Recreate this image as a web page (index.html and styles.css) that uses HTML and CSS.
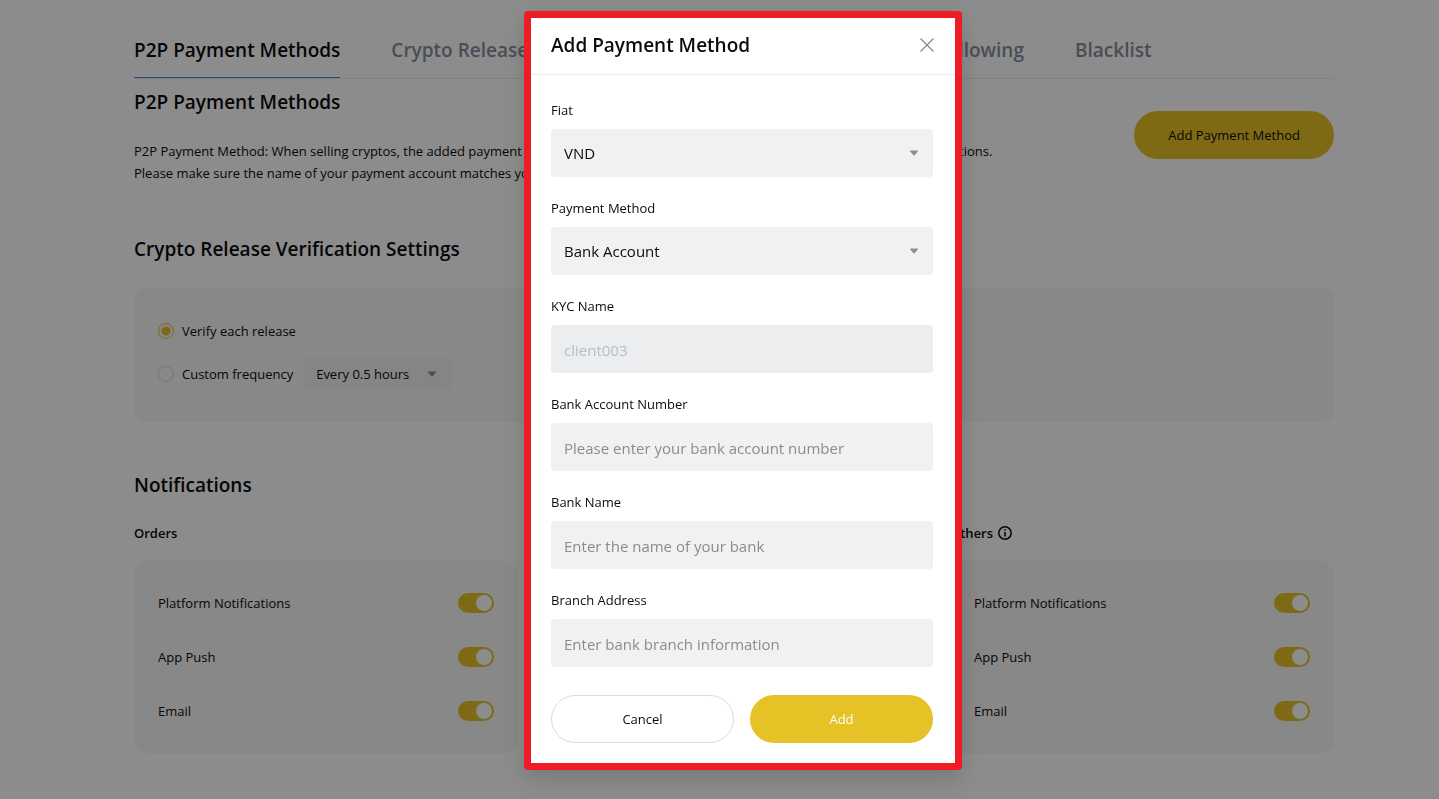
FILE: index.html
```html
<!DOCTYPE html>
<html lang="en">
<head>
<meta charset="utf-8">
<title>P2P Payment Methods</title>
<link rel="stylesheet" href="styles.css">
</head>
<body>
<main class="page">
  <nav class="tabs">
    <a class="tab tab-active" href="#methods">P2P Payment Methods</a>
    <a class="tab" href="#release">Crypto Release Verification Settings</a>
    <a class="tab" href="#notifications">Notifications</a>
    <a class="tab" href="#following">Following</a>
    <a class="tab" href="#blacklist">Blacklist</a>
  </nav>

  <section class="intro" id="methods">
    <div class="intro-text">
      <h2 class="heading">P2P Payment Methods</h2>
      <p class="intro-copy">P2P Payment Method: When selling cryptos, the added payment method will be displayed to buyers as one of your available payment options.<br>Please make sure the name of your payment account matches your verified name.</p>
    </div>
    <button class="btn btn-primary btn-dark" type="button">Add Payment Method</button>
  </section>

  <section class="release" id="release">
    <h2 class="heading">Crypto Release Verification Settings</h2>
    <div class="release-card">
      <div class="release-row">
        <label class="choice"><input class="radio" type="radio" name="verify" checked>Verify each release</label>
      </div>
      <div class="release-row">
        <label class="choice"><input class="radio" type="radio" name="verify">Custom frequency</label>
        <div class="select-box select-small">
          <select class="select" aria-label="Frequency"><option>Every 0.5 hours</option></select>
          <svg class="caret" viewBox="0 0 8 6" aria-hidden="true"><path d="M0 1.2C0 .8.3.5.7.5h6.6c.4 0 .7.3.7.7L4.5 5.3c-.3.3-.7.3-1 0z"/></svg>
        </div>
      </div>
    </div>
  </section>

  <section class="notices" id="notifications">
    <h2 class="heading">Notifications</h2>
    <div class="notice-grid">
      <div class="notice">
        <h3 class="subheading">Orders</h3>
        <div class="notice-card">
          <label class="notice-row">Platform Notifications<input class="switch" type="checkbox" role="switch" checked></label>
          <label class="notice-row">App Push<input class="switch" type="checkbox" role="switch" checked></label>
          <label class="notice-row">Email<input class="switch" type="checkbox" role="switch" checked></label>
        </div>
      </div>
      <div class="notice">
        <h3 class="subheading">Chat</h3>
        <div class="notice-card">
          <label class="notice-row">Platform Notifications<input class="switch" type="checkbox" role="switch" checked></label>
          <label class="notice-row">App Push<input class="switch" type="checkbox" role="switch" checked></label>
          <label class="notice-row">Email<input class="switch" type="checkbox" role="switch" checked></label>
        </div>
      </div>
      <div class="notice">
        <h3 class="subheading">Others
          <svg class="info" viewBox="0 0 14 14" aria-hidden="true"><circle cx="7" cy="7" r="6.2" fill="none" stroke="currentColor" stroke-width="1.5"/><path d="M6.2 3.2h1.6v1.5H6.2zM6.2 5.9h1.6v4.6H6.2z" fill="currentColor"/></svg>
        </h3>
        <div class="notice-card">
          <label class="notice-row">Platform Notifications<input class="switch" type="checkbox" role="switch" checked></label>
          <label class="notice-row">App Push<input class="switch" type="checkbox" role="switch" checked></label>
          <label class="notice-row">Email<input class="switch" type="checkbox" role="switch" checked></label>
        </div>
      </div>
    </div>
  </section>
</main>

<div class="overlay">
  <form class="modal" role="dialog" aria-labelledby="modal-title">
    <header class="modal-head">
      <h1 class="modal-title" id="modal-title">Add Payment Method</h1>
      <button class="close" type="button" aria-label="Close"><svg class="close-icon" viewBox="0 0 14 14" aria-hidden="true"><path d="M.5.5l13 13M13.5.5l-13 13" fill="none" stroke="currentColor" stroke-width="1.4"/></svg></button>
    </header>
    <div class="modal-body">
      <div class="field">
        <label class="field-label" for="fiat">Fiat</label>
        <div class="select-box">
          <select class="select" id="fiat"><option>VND</option></select>
          <svg class="caret" viewBox="0 0 8 6" aria-hidden="true"><path d="M0 1.2C0 .8.3.5.7.5h6.6c.4 0 .7.3.7.7L4.5 5.3c-.3.3-.7.3-1 0z"/></svg>
        </div>
      </div>
      <div class="field">
        <label class="field-label" for="method">Payment Method</label>
        <div class="select-box">
          <select class="select" id="method"><option>Bank Account</option></select>
          <svg class="caret" viewBox="0 0 8 6" aria-hidden="true"><path d="M0 1.2C0 .8.3.5.7.5h6.6c.4 0 .7.3.7.7L4.5 5.3c-.3.3-.7.3-1 0z"/></svg>
        </div>
      </div>
      <div class="field">
        <label class="field-label" for="kyc">KYC Name</label>
        <input class="input" id="kyc" type="text" value="client003" disabled>
      </div>
      <div class="field">
        <label class="field-label" for="account">Bank Account Number</label>
        <input class="input" id="account" type="text" placeholder="Please enter your bank account number">
      </div>
      <div class="field">
        <label class="field-label" for="bank">Bank Name</label>
        <input class="input" id="bank" type="text" placeholder="Enter the name of your bank">
      </div>
      <div class="field">
        <label class="field-label" for="branch">Branch Address</label>
        <input class="input" id="branch" type="text" placeholder="Enter bank branch information">
      </div>
    </div>
    <footer class="modal-foot">
      <button class="btn btn-outline" type="button">Cancel</button>
      <button class="btn btn-primary" type="submit">Add</button>
    </footer>
  </form>
</div>
</body>
</html>
```
FILE: styles.css
```css
* { box-sizing: border-box; }

body {
  margin: 0;
  background: #fff;
  color: #0c0c0e;
  font-family: "Segoe UI", "Open Sans", "Noto Sans", sans-serif;
  font-size: 13px;
  line-height: 22px;
}

h1, h2, h3, p { margin: 0; }

button, input, select { font: inherit; color: inherit; }

.page { padding: 36px 105px 45px 134px; }

.tabs {
  display: flex;
  gap: 51px;
  border-bottom: 1px solid #eaecef;
  white-space: nowrap;
}

.tab {
  padding-bottom: 13px;
  border-bottom: 1px solid transparent;
  color: #848e9c;
  font-size: 19px;
  font-weight: 600;
  line-height: 28px;
  text-decoration: none;
}

.tab-active { color: #0c0c0e; border-bottom-color: #417ffb; }

.heading { font-size: 19px; font-weight: 600; line-height: 28px; }

.intro {
  display: flex;
  justify-content: space-between;
  align-items: flex-start;
  padding-top: 9px;
}

.intro-copy { margin-top: 24px; }

.btn {
  height: 48px;
  padding: 0 33px;
  border: 1px solid transparent;
  border-radius: 24px;
  cursor: pointer;
}

.btn-primary { background: #e5c225; color: #fff; }
.btn-dark { margin-top: 23px; color: #0c0c0e; white-space: nowrap; }
.btn-outline { background: #fff; border-color: #dcdcde; }

.release { margin-top: 51px; }

.release-card {
  display: flex;
  flex-direction: column;
  gap: 16px;
  margin-top: 25px;
  padding: 32px 24px;
  border-radius: 12px;
  background: #f7f7f7;
}

.release-row { display: flex; align-items: center; gap: 10px; }

.choice { display: flex; align-items: center; gap: 8px; }

.radio {
  appearance: none;
  width: 16px;
  height: 16px;
  margin: 0;
  border: 1px solid #d9d9d9;
  border-radius: 50%;
}

.radio:checked {
  border-color: #e5c225;
  background: radial-gradient(circle, #e5c225 4px, transparent 5px);
}

.select-box {
  display: grid;
  grid-template-columns: 1fr 31px;
  align-items: center;
  height: 48px;
  border-radius: 4px;
  background: #f1f1f1;
  font-size: 15px;
}

.select {
  grid-area: 1 / 1 / 2 / 3;
  appearance: none;
  width: 100%;
  height: 100%;
  padding: 0 31px 0 13px;
  border: 0;
  background: transparent;
}

.caret {
  grid-area: 1 / 2;
  width: 8px;
  height: 6px;
  margin-left: 8px;
  fill: #848e9c;
  pointer-events: none;
}

.select-small { width: 148px; height: 32px; background: #f3f3f3; font-size: 13px; }

.notices { margin-top: 49px; }

.notice-grid {
  display: grid;
  grid-template-columns: repeat(3, 1fr);
  gap: 24px;
  margin-top: 23px;
}

.subheading {
  display: flex;
  align-items: center;
  gap: 5px;
  font-size: 13px;
  font-weight: 600;
}

.info { width: 14px; height: 14px; }

.notice-card {
  margin-top: 16px;
  padding: 16px 24px;
  border-radius: 16px;
  background: #f7f7f7;
}

.notice-row {
  display: flex;
  justify-content: space-between;
  align-items: center;
  height: 54px;
}

.switch {
  appearance: none;
  display: flex;
  align-items: center;
  width: 36px;
  height: 20px;
  margin: 0;
  padding: 2px;
  border-radius: 10px;
  background: #c4c8ce;
}

.switch::before {
  content: "";
  width: 16px;
  height: 16px;
  border-radius: 50%;
  background: #fff;
}

.switch:checked { justify-content: flex-end; background: #e5c225; }

.overlay {
  position: fixed;
  inset: 0;
  display: flex;
  justify-content: center;
  align-items: flex-start;
  padding: 11px 0 0 47px;
  overflow: auto;
  background: rgba(0, 0, 0, 0.45);
}

.modal {
  width: 438px;
  border: 7px solid #ee1c25;
  border-radius: 4px;
  background: #fff;
  box-shadow: 0 8px 24px rgba(0, 0, 0, 0.16);
}

.modal-head {
  display: flex;
  justify-content: space-between;
  align-items: center;
  height: 57px;
  padding: 0 21px 2px 20px;
  border-bottom: 1px solid #eaecef;
}

.modal-title { font-size: 19px; font-weight: 600; line-height: 28px; }

.close {
  display: flex;
  padding: 0;
  border: 0;
  background: none;
  color: #848e9c;
  cursor: pointer;
}

.close-icon { width: 14px; height: 14px; }

.modal-body {
  display: flex;
  flex-direction: column;
  gap: 20px;
  padding: 24px 22px 28px 20px;
}

.field { display: flex; flex-direction: column; gap: 8px; }

.input {
  width: 100%;
  height: 48px;
  padding: 1px 13px 0;
  border: 0;
  border-radius: 4px;
  background: #f1f1f1;
  font-size: 15px;
}

.input::placeholder { color: #8c8c8c; opacity: 1; }
.input:disabled { background: #ecedef; color: #b7bdc8; }

.modal-foot {
  display: grid;
  grid-template-columns: 1fr 1fr;
  gap: 16px;
  padding: 0 22px 20px 20px;
}
```
